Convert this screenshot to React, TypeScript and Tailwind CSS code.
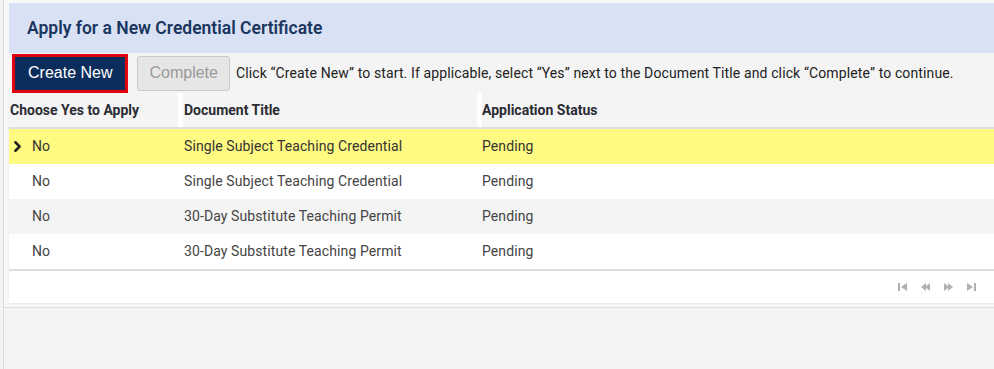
import { ChevronRight } from "lucide-react";

type Row = {
  choose: string;
  title: string;
  status: string;
};

const rows: Row[] = [
  { choose: "No", title: "Single Subject Teaching Credential", status: "Pending" },
  { choose: "No", title: "Single Subject Teaching Credential", status: "Pending" },
  { choose: "No", title: "30-Day Substitute Teaching Permit", status: "Pending" },
  { choose: "No", title: "30-Day Substitute Teaching Permit", status: "Pending" },
];

const PagerIcon = ({ kind }: { kind: "first" | "prev" | "next" | "last" }) => {
  return (
    <svg width="9" height="8" viewBox="0 0 9 8" className="fill-[#b0b0b0]">
      {kind === "first" && (
        <>
          <rect x="0" y="0" width="2" height="8" />
          <polygon points="9,0 9,8 3,4" />
        </>
      )}
      {kind === "prev" && (
        <>
          <polygon points="5,0 5,8 0,4" />
          <polygon points="9,0 9,8 4,4" />
        </>
      )}
      {kind === "next" && (
        <>
          <polygon points="0,0 0,8 5,4" />
          <polygon points="4,0 4,8 9,4" />
        </>
      )}
      {kind === "last" && (
        <>
          <polygon points="0,0 0,8 6,4" />
          <rect x="7" y="0" width="2" height="8" />
        </>
      )}
    </svg>
  );
};

export default function App() {
  return (
    <div className="h-[369px] w-[994px] overflow-hidden bg-[#f3f3f3] font-['Roboto',sans-serif]">
      <div className="ml-[3px] flex h-full flex-col border-l border-[#dcdcdc]">
        <div className="bg-[#f8f8f8] pb-[4px] pl-[5px] pt-[3px]">
          {/* header */}
          <div className="flex h-[50px] items-center bg-[#d8e2f4] pl-[18px] text-[17.5px] font-semibold text-[#1a365f]">
            Apply for a New Credential Certificate
          </div>

          {/* toolbar */}
          <div className="flex h-[40px] items-center bg-[#f4f4f4] pl-[3px]">
            <div className="flex h-[39px] items-center border-[3px] border-[#e3000f] bg-[#0b2d5b] px-[2px]">
              <button className="h-full bg-[#0b2d5b] px-[11px] font-['Liberation_Sans',Arial,sans-serif] text-[16px] text-white">
                Create New
              </button>
            </div>
            <button className="ml-[9px] h-[35px] rounded-[3px] border border-[#c9c9c9] bg-[#e6e6e6] px-[11px] font-['Liberation_Sans',Arial,sans-serif] text-[16px] text-[#9a9a9a]">
              Complete
            </button>
            <span className="ml-[6px] text-[14px] tracking-[0.12px] text-[#222]">
              Click “Create New” to start. If applicable, select “Yes” next to
              the Document Title and click “Complete” to continue.
            </span>
          </div>

          {/* grid */}
          <div className="bg-white shadow-[0_1px_2px_rgba(0,0,0,0.08)]">
            <div className="flex h-[36px] items-center border-b-2 border-[#dedede] bg-[#f4f4f4] text-[14px] font-bold text-[#2b2b33]">
              <div className="w-[169px] pl-[1px]">Choose Yes to Apply</div>
              <div className="flex h-full w-[299px] items-center border-l-[5px] border-white pl-[1px]">
                Document Title
              </div>
              <div className="flex h-full flex-1 items-center border-l-[5px] border-white">
                Application Status
              </div>
            </div>
            {rows.map((row, i) => (
              <div
                key={i}
                className={
                  i === 0
                    ? "flex h-[35px] items-center bg-[#fffa82] text-[14px] tracking-[0.1px] text-[#333]"
                    : i % 2 === 0
                      ? "flex h-[35px] items-center bg-[#f4f4f4] text-[14px] tracking-[0.1px] text-[#444]"
                      : "flex h-[35px] items-center bg-white text-[14px] tracking-[0.1px] text-[#444]"
                }
              >
                <div className="flex w-[174px] items-center">
                  <div className="flex w-[23px] justify-start">
                    {i === 0 && (
                      <ChevronRight size={17} strokeWidth={3.5} className="text-[#222]" />
                    )}
                  </div>
                  {row.choose}
                </div>
                <div className="w-[299px] pl-[1px]">{row.title}</div>
                <div className="flex-1">{row.status}</div>
              </div>
            ))}
            <div className="flex h-[34px] items-center justify-end gap-[14px] border-t-2 border-[#dedede] pr-[18px]">
              <PagerIcon kind="first" />
              <PagerIcon kind="prev" />
              <PagerIcon kind="next" />
              <PagerIcon kind="last" />
            </div>
          </div>
        </div>
        <div className="flex-1 border-t border-[#dcdcdc] bg-[#f3f3f3]" />
      </div>
    </div>
  );
}
